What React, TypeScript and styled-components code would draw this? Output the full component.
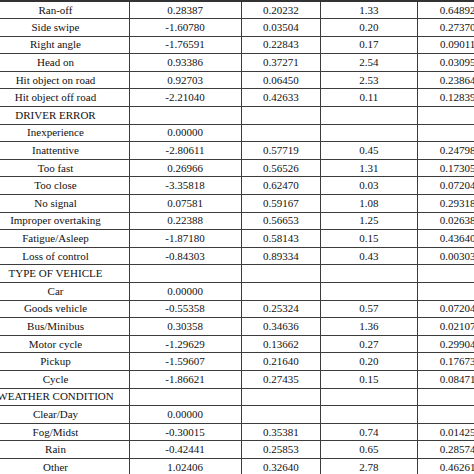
import styled, { createGlobalStyle } from 'styled-components';

type Row = { label: string; values?: string[] };

const ROWS: Row[] = [
	{ label: 'Ran-off', values: ['0.28387', '0.20232', '1.33', '0.64892'] },
	{ label: 'Side swipe', values: ['-1.60780', '0.03504', '0.20', '0.27370'] },
	{ label: 'Right angle', values: ['-1.76591', '0.22843', '0.17', '0.09011'] },
	{ label: 'Head on', values: ['0.93386', '0.37271', '2.54', '0.03095'] },
	{ label: 'Hit object on road', values: ['0.92703', '0.06450', '2.53', '0.23864'] },
	{ label: 'Hit object off road', values: ['-2.21040', '0.42633', '0.11', '0.12839'] },
	{ label: 'DRIVER ERROR' },
	{ label: 'Inexperience', values: ['0.00000', '', '', ''] },
	{ label: 'Inattentive', values: ['-2.80611', '0.57719', '0.45', '0.24798'] },
	{ label: 'Too fast', values: ['0.26966', '0.56526', '1.31', '0.17305'] },
	{ label: 'Too close', values: ['-3.35818', '0.62470', '0.03', '0.07204'] },
	{ label: 'No signal', values: ['0.07581', '0.59167', '1.08', '0.29318'] },
	{ label: 'Improper overtaking', values: ['0.22388', '0.56653', '1.25', '0.02638'] },
	{ label: 'Fatigue/Asleep', values: ['-1.87180', '0.58143', '0.15', '0.43640'] },
	{ label: 'Loss of control', values: ['-0.84303', '0.89334', '0.43', '0.00303'] },
	{ label: 'TYPE OF VEHICLE' },
	{ label: 'Car', values: ['0.00000', '', '', ''] },
	{ label: 'Goods vehicle', values: ['-0.55358', '0.25324', '0.57', '0.07204'] },
	{ label: 'Bus/Minibus', values: ['0.30358', '0.34636', '1.36', '0.02107'] },
	{ label: 'Motor cycle', values: ['-1.29629', '0.13662', '0.27', '0.29904'] },
	{ label: 'Pickup', values: ['-1.59607', '0.21640', '0.20', '0.17673'] },
	{ label: 'Cycle', values: ['-1.86621', '0.27435', '0.15', '0.08471'] },
	{ label: 'WEATHER CONDITION' },
	{ label: 'Clear/Day', values: ['0.00000', '', '', ''] },
	{ label: 'Fog/Midst', values: ['-0.30015', '0.35381', '0.74', '0.01425'] },
	{ label: 'Rain', values: ['-0.42441', '0.25853', '0.65', '0.28574'] },
	{ label: 'Other', values: ['1.02406', '0.32640', '2.78', '0.46261'] },
];

// column widths; the first one starts off-screen, like the cropped source
const COLUMNS = [147, 112, 79.5, 96.7, 81];

const App = () => {
	return (
		<>
			<GlobalStyle />
			<Page>
				<Table>
					<colgroup>
						{COLUMNS.map((w, i) => (
							<col key={i} style={{ width: `${w}px` }} />
						))}
					</colgroup>
					<tbody>
						{ROWS.map(({ label, values }) => (
							<tr key={label}>
								<Cell>{label}</Cell>
								{(values ?? ['', '', '', '']).map((v, i) => (
									<Cell key={i}>{v}</Cell>
								))}
							</tr>
						))}
					</tbody>
				</Table>
			</Page>
		</>
	);
};
export default App;

const GlobalStyle = createGlobalStyle`
	html, body {
		margin: 0;
		padding: 0;
		background: #ffffff;
		overflow: hidden;
	}
`;

const Page = styled.div`
	width: 474px;
	height: 474px;
	overflow: hidden;
	background: #ffffff;
`;

const Table = styled.table`
	margin-left: -18.5px;
	border-collapse: collapse;
	table-layout: fixed;
	width: 516.2px;
	border-top: 2px solid #333333;
	font-family: 'Liberation Serif', 'Times New Roman', serif;
	font-size: 11px;
	color: #111111;
`;

const Cell = styled.td`
	height: 17.6px;
	box-sizing: border-box;
	padding: 0;
	border: 1px solid #3c3c3c;
	text-align: center;
	vertical-align: middle;
	white-space: nowrap;
	overflow: hidden;
	line-height: 1;
`;
